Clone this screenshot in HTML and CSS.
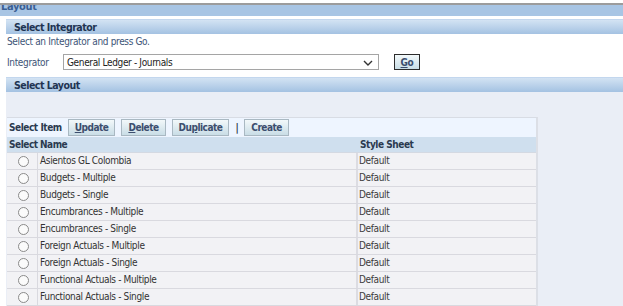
FILE: index.html
```html
<!DOCTYPE html>
<html>
<head>
<meta charset="utf-8">
<link rel="stylesheet" href="styles.css">
</head>
<body>
<div class="topline"></div>
<div class="page-title"><span class="page-title-text">Layout</span></div>
<div class="content">
  <div class="section-header">Select Integrator</div>
  <div class="instr">Select an Integrator and press Go.</div>
  <div class="integrator-row">
    <span class="label">Integrator</span>
    <div class="select">
      <span class="select-text">General Ledger - Journals</span>
      <svg class="chevron" width="10" height="6" viewBox="0 0 10 6"><path d="M1 1 L5 5 L9 1" fill="none" stroke="#333" stroke-width="1.4"/></svg>
    </div>
    <button class="go-btn"><u>G</u>o</button>
  </div>
  <div class="section-header">Select Layout</div>
  <div class="layout-body">
    <div class="table">
      <div class="toolbar">
        <span class="tb-label">Select Item</span>
        <button class="tb-btn"><u>U</u>pdate</button>
        <button class="tb-btn"><u>D</u>elete</button>
        <button class="tb-btn">Du<u>p</u>licate</button>
        <span class="tb-sep">|</span>
        <button class="tb-btn">Create</button>
      </div>
      <div class="row head">
        <div class="c-sel">Select</div>
        <div class="c-name">Name</div>
        <div class="c-style">Style Sheet</div>
      </div>
      <div class="row"><div class="c-sel"><span class="radio"></span></div><div class="c-name">Asientos GL Colombia</div><div class="c-style">Default</div></div>
      <div class="row"><div class="c-sel"><span class="radio"></span></div><div class="c-name">Budgets - Multiple</div><div class="c-style">Default</div></div>
      <div class="row"><div class="c-sel"><span class="radio"></span></div><div class="c-name">Budgets - Single</div><div class="c-style">Default</div></div>
      <div class="row"><div class="c-sel"><span class="radio"></span></div><div class="c-name">Encumbrances - Multiple</div><div class="c-style">Default</div></div>
      <div class="row"><div class="c-sel"><span class="radio"></span></div><div class="c-name">Encumbrances - Single</div><div class="c-style">Default</div></div>
      <div class="row"><div class="c-sel"><span class="radio"></span></div><div class="c-name">Foreign Actuals - Multiple</div><div class="c-style">Default</div></div>
      <div class="row"><div class="c-sel"><span class="radio"></span></div><div class="c-name">Foreign Actuals - Single</div><div class="c-style">Default</div></div>
      <div class="row"><div class="c-sel"><span class="radio"></span></div><div class="c-name">Functional Actuals - Multiple</div><div class="c-style">Default</div></div>
      <div class="row"><div class="c-sel"><span class="radio"></span></div><div class="c-name">Functional Actuals - Single</div><div class="c-style">Default</div></div>
      <div class="row"><div class="c-sel"><span class="radio"></span></div><div class="c-name">Journals - Multiple</div><div class="c-style">Default</div></div>
    </div>
  </div>
</div>
</body>
</html>
```

FILE: styles.css
```css
html, body {
  margin: 0;
  padding: 0;
  background: #ffffff;
  overflow: hidden;
}
body {
  width: 623px;
  height: 306px;
  font-family: "DejaVu Sans Condensed", "DejaVu Sans", sans-serif;
  font-size: 10px;
  letter-spacing: -0.35px;
  color: #333333;
}
.topline {
  height: 2px;
  margin-top: 3px;
  background: #9c9c9c;
}
.page-title {
  height: 11px;
  background: #a8c5e4;
  overflow: hidden;
}
.page-title-text {
  display: block;
  margin-top: -5px;
  padding-left: 1px;
  font-weight: bold;
  font-size: 11px;
  line-height: 14px;
  color: #3a5f94;
}
.content {
  margin-top: 3px;
  padding-left: 6px;
}
.section-header {
  height: 14px;
  line-height: 14px;
  padding-left: 8px;
  font-weight: bold;
  font-size: 10.5px;
  letter-spacing: -0.5px;
  color: #1f3452;
  background: linear-gradient(#d3e3f3, #a4c2e2);
  border-top: 1px solid #c3d7ee;
}
.instr {
  padding: 1px 0 0 1px;
  height: 15px;
  line-height: 14px;
  color: #3d5477;
}
.integrator-row {
  display: flex;
  align-items: center;
  height: 16px;
  margin-top: 4px;
  margin-bottom: 7px;
}
.label {
  width: 56px;
  padding-left: 1px;
  color: #3d5477;
}
.select {
  position: relative;
  width: 314px;
  height: 14px;
  border: 1px solid #a5a5a5;
  background: #ffffff;
  display: flex;
  align-items: center;
}
.select-text {
  padding-left: 3px;
  color: #222222;
}
.chevron {
  position: absolute;
  right: 5px;
  top: 5px;
}
.go-btn {
  margin-left: 15px;
  width: 26px;
  height: 16px;
  padding: 0;
  border: 1px solid #2c2c2c;
  background: linear-gradient(#f3f9fb, #c8dde6);
  font-family: "DejaVu Sans Condensed", "DejaVu Sans", sans-serif;
  font-weight: bold;
  font-size: 10px;
  letter-spacing: -0.35px;
  color: #3c4e6e;
}
.layout-body {
  background: #eaeef6;
  height: 220px;
  padding: 25px 0 0 1px;
}
.table {
  width: 529px;
  border-top: 1px solid #d8dce4;
  border-right: 2px solid #dcdfe6;
}
.toolbar {
  display: flex;
  align-items: center;
  height: 19px;
  background: #eef5ff;
  padding-left: 2px;
}
.tb-label {
  font-weight: bold;
  letter-spacing: -0.45px;
  color: #2b3a4f;
  margin-right: 6px;
}
.tb-btn {
  height: 17px;
  padding: 0 6px;
  margin-right: 6px;
  border: 1px solid #a9b8c2;
  background: linear-gradient(#f2f8fa, #c9dde6);
  font-family: "DejaVu Sans Condensed", "DejaVu Sans", sans-serif;
  font-weight: bold;
  font-size: 10px;
  letter-spacing: -0.5px;
  color: #3c4e6e;
}
.tb-sep {
  font-weight: bold;
  color: #2b3a4f;
  margin-right: 6px;
}
.row {
  display: flex;
  height: 16px;
  line-height: 16px;
  background: #f2f2f5;
  border-bottom: 1px solid #d9d9df;
}
.row.head {
  background: #cfdfee;
  font-weight: bold;
  letter-spacing: -0.45px;
  color: #2b3a4f;
  height: 15px;
  line-height: 15px;
  border-bottom: 1px solid #d4d9e2;
}
.c-sel {
  width: 31px;
  padding-left: 2px;
  box-sizing: border-box;
  border-right: 1px solid #d9d9df;
  display: flex;
  align-items: center;
  justify-content: center;
}
.row.head .c-sel {
  justify-content: flex-start;
  border-right: none;
}
.c-name {
  width: 320px;
  padding-left: 2px;
  box-sizing: border-box;
  border-right: 2px solid #dcdce2;
}
.row.head .c-name {
  border-right: none;
  width: 321px;
}
.c-style {
  flex: 1;
  padding-left: 1px;
  color: #3b3b3b;
}
.row.head .c-style {
  color: #2b3a4f;
}
.radio {
  display: block;
  width: 9px;
  height: 9px;
  border: 1px solid #8a8a8a;
  border-radius: 50%;
  background: #fbfbfb;
  margin-left: 1px;
}
```
